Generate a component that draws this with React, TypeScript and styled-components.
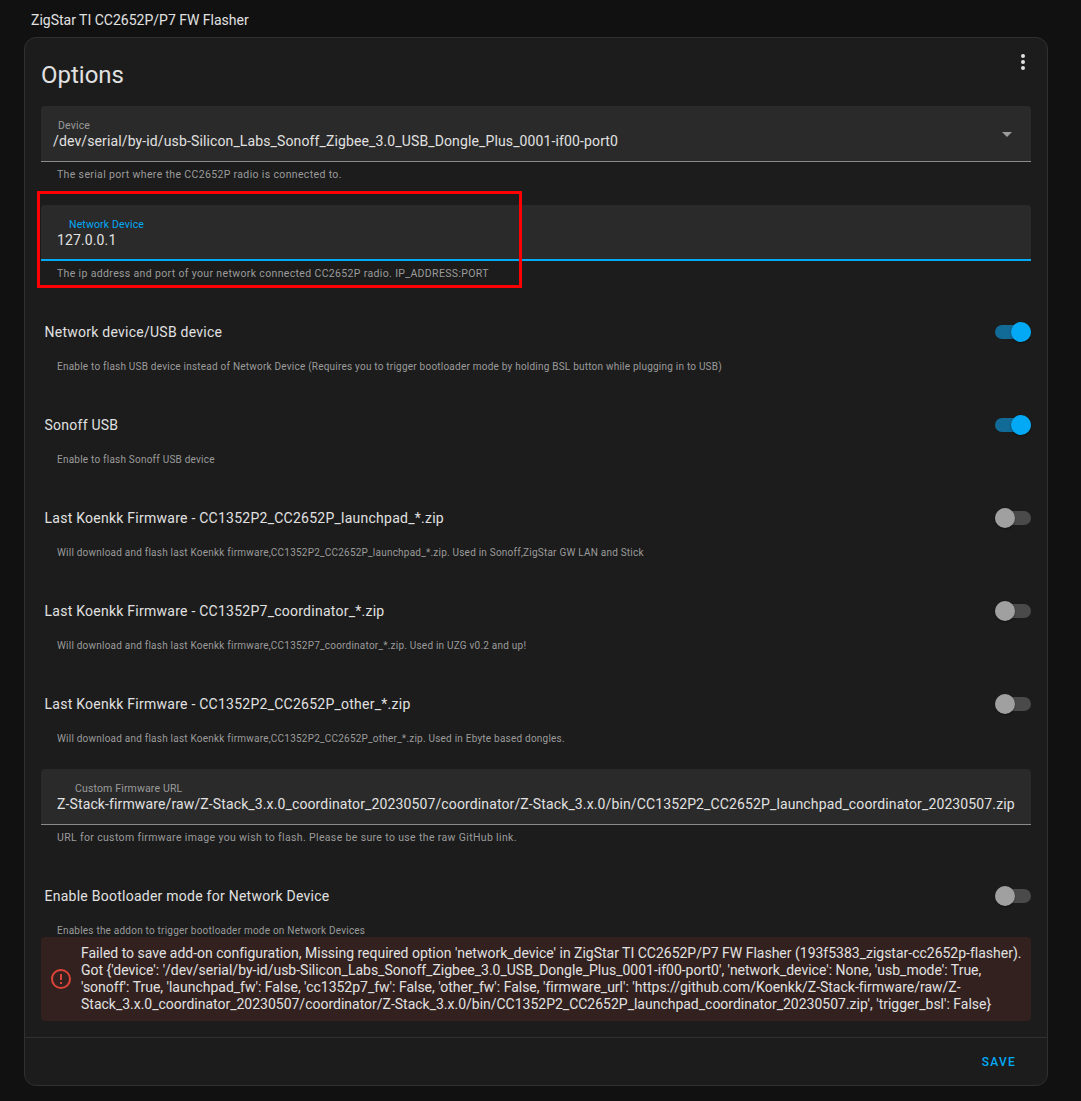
import React from "react";
import styled, { createGlobalStyle } from "styled-components";

const GlobalStyle = createGlobalStyle`
  html, body {
    margin: 0;
    padding: 0;
    background: #111111;
    font-family: Roboto, "Noto Sans", sans-serif;
    color: #e1e1e1;
  }
`;

const Page = styled.div`
  width: 1081px;
  height: 1101px;
  overflow: hidden;
  box-sizing: border-box;
  padding: 0 33px 0 24px;
`;

const AddonName = styled.div`
  height: 37px;
  padding: 7px 0 0 7px;
  box-sizing: border-box;
  font-size: 14px;
  line-height: 26px;
  color: #e1e1e1;
`;

const Card = styled.section`
  position: relative;
  box-sizing: border-box;
  height: 1049px;
  border: 1px solid #303030;
  border-radius: 12px;
  background: #1c1c1c;
  display: flex;
  flex-direction: column;
`;

const CardHeader = styled.header`
  height: 68px;
  flex: none;
  display: flex;
  justify-content: space-between;
  padding: 0 12px 0 16px;
`;

const CardTitle = styled.h1`
  margin: 0;
  font-size: 24px;
  font-weight: 400;
  line-height: 74px;
  color: #e1e1e1;
`;

const MenuButton = styled.button`
  width: 24px;
  height: 24px;
  margin: 12px 0 0;
  padding: 0;
  border: 0;
  background: none;
  color: #e1e1e1;
`;

const CardBody = styled.div`
  flex: 1;
  padding: 0 16px;
`;

const Field = styled.div<{ $focused?: boolean }>`
  position: relative;
  box-sizing: border-box;
  height: 56px;
  background: #2a2a2a;
  border-radius: 4px 4px 0 0;
  border-bottom: ${(p) => (p.$focused ? "2px solid #03a9f4" : "1px solid #8a8a8a")};
  display: flex;
  flex-direction: column;
`;

const FieldLabel = styled.label<{ $focused?: boolean; $indent: number }>`
  padding: 13px 0 0 ${(p) => p.$indent}px;
  font-size: 10.5px;
  line-height: 14px;
  letter-spacing: 0.15px;
  color: ${(p) => (p.$focused ? "#03a9f4" : "#9b9b9b")};
`;

const FieldValue = styled.div<{ $indent: number }>`
  padding-left: ${(p) => p.$indent}px;
  font-size: 14px;
  line-height: 17px;
  letter-spacing: 0.125px;
  white-space: nowrap;
  color: #e1e1e1;
`;

const DropArrow = styled.span`
  position: absolute;
  right: 19px;
  top: 26px;
  width: 0;
  height: 0;
  border-left: 5px solid transparent;
  border-right: 5px solid transparent;
  border-top: 5px solid #9b9b9b;
`;

const Helper = styled.div<{ $after: number }>`
  padding: 6px 0 0 16px;
  height: ${(p) => p.$after}px;
  box-sizing: border-box;
  font-size: 10.5px;
  line-height: 14px;
  letter-spacing: 0.35px;
  color: #9b9b9b;
`;

const ToggleRow = styled.div<{ $short?: boolean }>`
  height: ${(p) => (p.$short ? 89 : 93)}px;
  box-sizing: border-box;
  padding: 0 0 0 3.5px;
  display: flex;
  flex-direction: column;
`;

const ToggleHead = styled.div`
  height: 48px;
  display: flex;
  align-items: center;
  justify-content: space-between;
`;

const ToggleLabel = styled.span`
  font-size: 14px;
  letter-spacing: 0.25px;
  color: #e1e1e1;
`;

const ToggleHelp = styled.div`
  padding: 4px 0 0 12.5px;
  font-size: 10px;
  line-height: 14px;
  letter-spacing: 0.22px;
  color: #9b9b9b;
`;

const Switch = styled.span<{ $on?: boolean }>`
  position: relative;
  width: 36px;
  height: 14px;
  border-radius: 7px;
  background: ${(p) => (p.$on ? "#116b96" : "#4a4a4a")};
`;

const Thumb = styled.span<{ $on?: boolean }>`
  position: absolute;
  top: -3px;
  left: ${(p) => (p.$on ? "16px" : "0")};
  width: 20px;
  height: 20px;
  border-radius: 50%;
  background: ${(p) => (p.$on ? "#03a9f4" : "#a0a0a0")};
  box-shadow: 0 1px 2px rgba(0, 0, 0, 0.4);
`;

const Alert = styled.div`
  height: 84px;
  box-sizing: border-box;
  margin-top: -28px;
  padding: 0 8px;
  display: flex;
  align-items: center;
  gap: 8px;
  border-radius: 4px;
  background: #332120;
`;

const AlertIcon = styled.svg`
  flex: none;
  width: 24px;
  height: 24px;
  color: #db4437;
`;

const AlertText = styled.div`
  font-size: 14px;
  line-height: 17px;
  letter-spacing: -0.008px;
  color: #e1e1e1;
`;

const CardActions = styled.footer`
  height: 47px;
  flex: none;
  border-top: 1px solid #303030;
  display: flex;
  align-items: center;
  justify-content: flex-end;
  padding: 0 31px 0 0;
`;

const SaveButton = styled.button`
  padding: 0;
  border: 0;
  background: none;
  font-family: inherit;
  font-size: 12px;
  font-weight: 500;
  letter-spacing: 1.25px;
  color: #03a9f4;
`;

const Highlight = styled.div`
  position: absolute;
  left: 12px;
  top: 153px;
  width: 485px;
  height: 97px;
  box-sizing: border-box;
  border: 3px solid #ff0000;
  pointer-events: none;
`;

const toggles = [
  {
    label: "Network device/USB device",
    help: "Enable to flash USB device instead of Network Device (Requires you to trigger bootloader mode by holding BSL button while plugging in to USB)",
    on: true,
  },
  { label: "Sonoff USB", help: "Enable to flash Sonoff USB device", on: true },
  {
    label: "Last Koenkk Firmware - CC1352P2_CC2652P_launchpad_*.zip",
    help: "Will download and flash last Koenkk firmware,CC1352P2_CC2652P_launchpad_*.zip. Used in Sonoff,ZigStar GW LAN and Stick",
    on: false,
  },
  {
    label: "Last Koenkk Firmware - CC1352P7_coordinator_*.zip",
    help: "Will download and flash last Koenkk firmware,CC1352P7_coordinator_*.zip. Used in UZG v0.2 and up!",
    on: false,
  },
  {
    label: "Last Koenkk Firmware - CC1352P2_CC2652P_other_*.zip",
    help: "Will download and flash last Koenkk firmware,CC1352P2_CC2652P_other_*.zip. Used in Ebyte based dongles.",
    on: false,
    short: true,
  },
];

function Toggle({ label, help, on, short }: { label: string; help: string; on: boolean; short?: boolean }) {
  return (
    <ToggleRow $short={short}>
      <ToggleHead>
        <ToggleLabel>{label}</ToggleLabel>
        <Switch $on={on}>
          <Thumb $on={on} />
        </Switch>
      </ToggleHead>
      <ToggleHelp>{help}</ToggleHelp>
    </ToggleRow>
  );
}

export default function App() {
  return (
    <Page>
      <GlobalStyle />
      <AddonName>ZigStar TI CC2652P/P7 FW Flasher</AddonName>
      <Card>
        <CardHeader>
          <CardTitle>Options</CardTitle>
          <MenuButton aria-label="menu">
            <svg viewBox="0 0 24 24" width="24" height="24" fill="currentColor">
              <path d="M12,16A2,2 0 0,1 14,18A2,2 0 0,1 12,20A2,2 0 0,1 10,18A2,2 0 0,1 12,16M12,10A2,2 0 0,1 14,12A2,2 0 0,1 12,14A2,2 0 0,1 10,12A2,2 0 0,1 12,10M12,4A2,2 0 0,1 14,6A2,2 0 0,1 12,8A2,2 0 0,1 10,6A2,2 0 0,1 12,4Z" />
            </svg>
          </MenuButton>
        </CardHeader>
        <CardBody>
          <Field>
            <FieldLabel $indent={17}>Device</FieldLabel>
            <FieldValue $indent={12}>/dev/serial/by-id/usb-Silicon_Labs_Sonoff_Zigbee_3.0_USB_Dongle_Plus_0001-if00-port0</FieldValue>
            <DropArrow />
          </Field>
          <Helper $after={43}>The serial port where the CC2652P radio is connected to.</Helper>
          <Field $focused>
            <FieldLabel $focused $indent={28}>Network Device</FieldLabel>
            <FieldValue $indent={16}>127.0.0.1</FieldValue>
          </Field>
          <Helper $after={47}>The ip address and port of your network connected CC2652P radio. IP_ADDRESS:PORT</Helper>
          {toggles.map((t) => (
            <Toggle key={t.label} {...t} />
          ))}
          <Field>
            <FieldLabel $indent={34}>Custom Firmware URL</FieldLabel>
            <FieldValue $indent={16}>Z-Stack-firmware/raw/Z-Stack_3.x.0_coordinator_20230507/coordinator/Z-Stack_3.x.0/bin/CC1352P2_CC2652P_launchpad_coordinator_20230507.zip</FieldValue>
          </Field>
          <Helper $after={47}>URL for custom firmware image you wish to flash. Please be sure to use the raw GitHub link.</Helper>
          <Toggle
            label="Enable Bootloader mode for Network Device"
            help="Enables the addon to trigger bootloader mode on Network Devices"
            on={false}
          />
          <Alert>
            <AlertIcon viewBox="0 0 24 24" fill="currentColor">
              <path d="M11,15H13V17H11V15M11,7H13V13H11V7M12,2C6.47,2 2,6.5 2,12A10,10 0 0,0 12,22A10,10 0 0,0 22,12A10,10 0 0,0 12,2M12,20A8,8 0 0,1 4,12A8,8 0 0,1 12,4A8,8 0 0,1 20,12A8,8 0 0,1 12,20Z" />
            </AlertIcon>
            <AlertText>
              Failed to save add-on configuration, Missing required option 'network_device' in ZigStar TI CC2652P/P7 FW Flasher (193f5383_zigstar-cc2652p-flasher). Got {"{"}'device': '/dev/serial/by-id/usb-Silicon_Labs_Sonoff_Zigbee_3.0_USB_Dongle_Plus_0001-if00-port0', 'network_device': None, 'usb_mode': True, 'sonoff': True, 'launchpad_fw': False, 'cc1352p7_fw': False, 'other_fw': False, 'firmware_url': 'https://github.com/Koenkk/Z-Stack-firmware/raw/Z-Stack_3.x.0_coordinator_20230507/coordinator/Z-Stack_3.x.0/bin/CC1352P2_CC2652P_launchpad_coordinator_20230507.zip', 'trigger_bsl': False{"}"}
            </AlertText>
          </Alert>
        </CardBody>
        <CardActions>
          <SaveButton>SAVE</SaveButton>
        </CardActions>
        <Highlight />
      </Card>
    </Page>
  );
}
